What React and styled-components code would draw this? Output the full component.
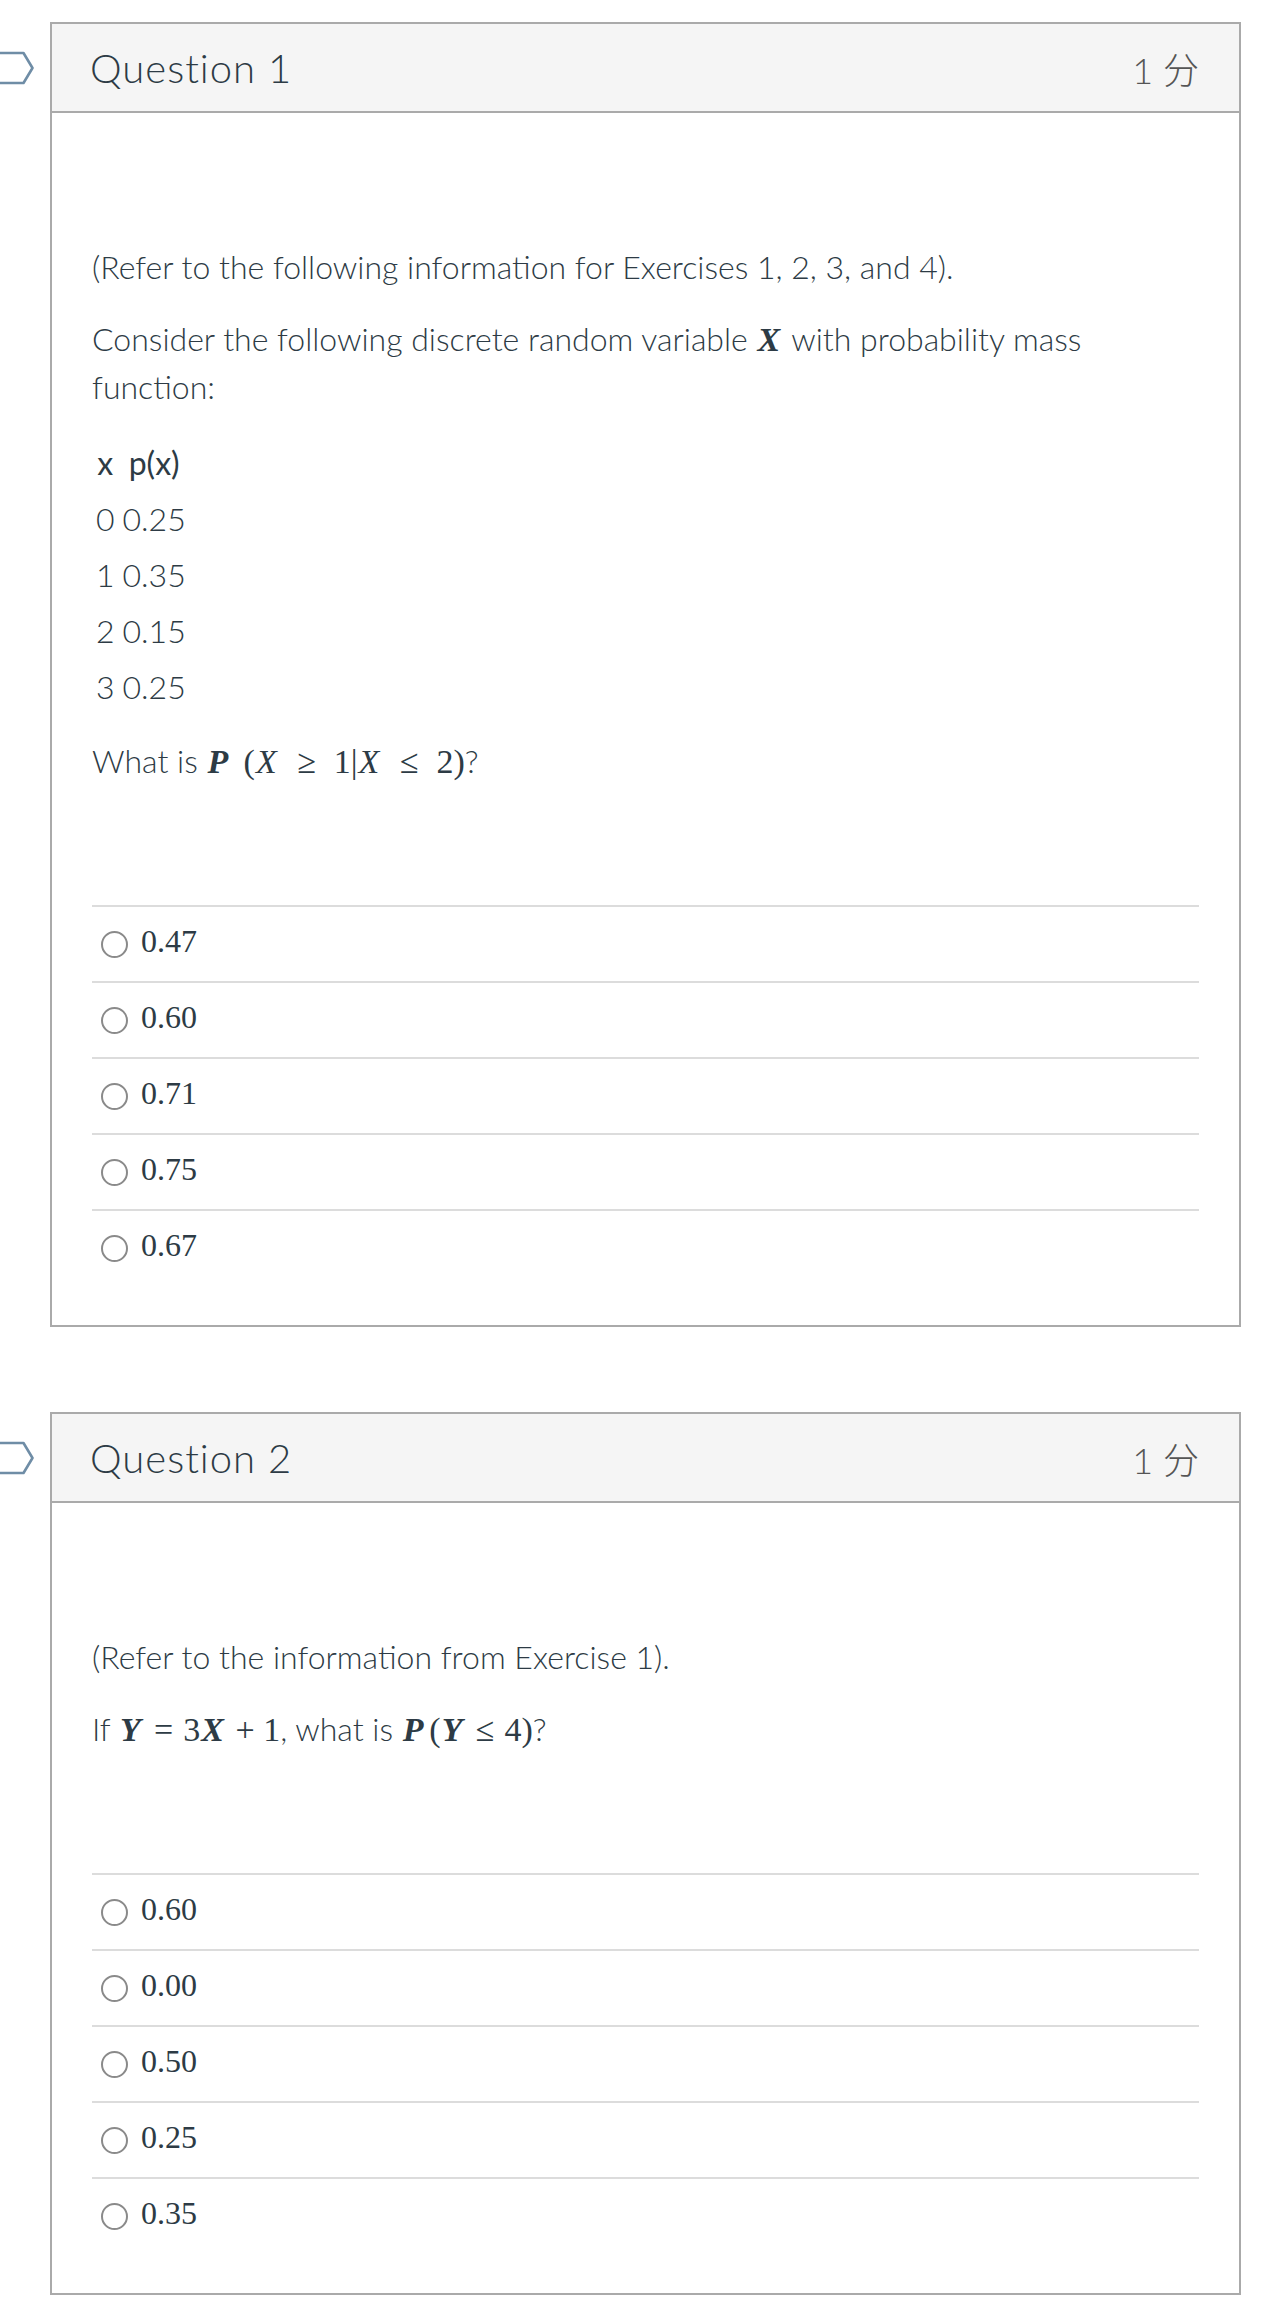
import React from "react";
import styled, { createGlobalStyle } from "styled-components";

const GlobalStyle = createGlobalStyle`
  html, body {
    margin: 0;
    padding: 0;
    background: #ffffff;
  }
  body {
    font-family: Lato, "Noto Sans", "Noto Sans CJK SC", sans-serif;
    font-weight: 300;
    color: #2d3b45;
  }
`;

const Page = styled.div`
  display: flex;
  flex-direction: column;
  gap: 85px;
  padding: 22px 0 25px 50px;
`;

const Card = styled.section`
  position: relative;
  width: 1191px;
  box-sizing: border-box;
  border: 2px solid #aaaaaa;
  background: #ffffff;
`;

const Flag = styled.svg`
  position: absolute;
  left: -52px;
  top: 26px;
  width: 34px;
  height: 36px;
  overflow: visible;
`;

const Header = styled.header`
  display: flex;
  align-items: center;
  justify-content: space-between;
  height: 87px;
  padding: 0 40px 0 38px;
  background: #f5f5f5;
  border-bottom: 2px solid #aaaaaa;
`;

const Title = styled.h2`
  margin: 0;
  font-family: Lato, "Noto Sans", sans-serif;
  font-size: 40px;
  font-weight: 300;
  letter-spacing: 1px;
  color: #2d3b45;
`;

const Points = styled.span`
  font-family: Lato, "Noto Sans CJK SC", sans-serif;
  font-size: 36px;
  font-weight: 300;
  color: #555555;
`;

const Body = styled.div`
  padding: 130px 40px 40px 40px;
`;

const Para = styled.p`
  margin: 0 0 24px 0;
  font-size: 32px;
  line-height: 48px;
  &:last-child {
    margin-bottom: 0;
  }
`;

const Table = styled.table`
  border-collapse: collapse;
  margin: 22px 0;
  font-size: 32px;
  line-height: 48px;
  color: #2d3b45;

  th,
  td {
    padding: 4px;
    vertical-align: middle;
  }
  th {
    font-weight: 400;
    text-align: center;
  }
  td {
    text-align: left;
  }
`;

const Mathx = styled.span`
  font-family: "Liberation Serif", "Times New Roman", serif;
  font-size: 34px;
  font-weight: 400;
  line-height: 1;
  white-space: nowrap;
`;

const Mi = styled.i`
  font-style: italic;
  font-weight: ${(p) => (p.$bold ? 700 : 400)};
  padding: 0 0.09em 0 0.03em;
`;

const Rel = styled.span`
  margin: 0 ${(p) => p.$space || "0.3em"};
`;

const Bin = styled.span`
  margin: 0 0.25em;
`;

const Thin = styled.span`
  display: inline-block;
  width: ${(p) => p.$w || "0.2em"};
`;

const Answers = styled.div`
  margin-top: 120px;
`;

const AnswerRow = styled.label`
  display: flex;
  align-items: center;
  gap: 13px;
  height: 76px;
  box-sizing: border-box;
  padding-left: 9px;
  border-top: 2px solid #dcdcdc;
  cursor: pointer;
`;

const Radio = styled.input.attrs({ type: "radio" })`
  appearance: none;
  margin: 0;
  width: 27px;
  height: 27px;
  box-sizing: border-box;
  border: 2.5px solid #8a8a8a;
  border-radius: 50%;
  background: #ffffff;
  flex-shrink: 0;
`;

const AnswerText = styled.span`
  font-family: "Liberation Serif", "Times New Roman", serif;
  font-size: 32px;
  font-weight: 400;
  line-height: 48px;
  padding-bottom: 6px;
  color: #2d3b45;
`;

function FlagIcon() {
  return (
    <Flag viewBox="0 0 34 36" aria-hidden="true">
      <path
        d="M-10 3 H23.5 L32.5 18 L23.5 33 H-10"
        fill="none"
        stroke="#6f8da6"
        strokeWidth="2.6"
        strokeLinejoin="round"
      />
    </Flag>
  );
}

function Question({ name, number, children, answers }) {
  return (
    <Card>
      <FlagIcon />
      <Header>
        <Title>Question {number}</Title>
        <Points>1 分</Points>
      </Header>
      <Body>
        {children}
        <Answers>
          {answers.map((a) => (
            <AnswerRow key={a}>
              <Radio name={name} />
              <AnswerText>{a}</AnswerText>
            </AnswerRow>
          ))}
        </Answers>
      </Body>
    </Card>
  );
}

const pmf = [
  ["0", "0.25"],
  ["1", "0.35"],
  ["2", "0.15"],
  ["3", "0.25"],
];

export default function App() {
  return (
    <>
      <GlobalStyle />
      <Page>
        <Question
          name="q1"
          number={1}
          answers={["0.47", "0.60", "0.71", "0.75", "0.67"]}
        >
          <Para>(Refer to the following information for Exercises 1, 2, 3, and 4).</Para>
          <Para>
            Consider the following discrete random variable{" "}
            <Mathx>
              <Mi $bold>X</Mi>
            </Mathx>{" "}
            with probability mass function:
          </Para>
          <Table>
            <thead>
              <tr>
                <th>x</th>
                <th>p(x)</th>
              </tr>
            </thead>
            <tbody>
              {pmf.map(([x, p]) => (
                <tr key={x}>
                  <td>{x}</td>
                  <td>{p}</td>
                </tr>
              ))}
            </tbody>
          </Table>
          <Para>
            What is{" "}
            <Mathx>
              <Mi $bold>P</Mi>
              <Thin $w="0.36em" />
              (<Mi>X</Mi>
              <Rel $space="0.52em">≥</Rel>1|<Mi>X</Mi>
              <Rel $space="0.52em">≤</Rel>2)
            </Mathx>
            ?
          </Para>
        </Question>

        <Question
          name="q2"
          number={2}
          answers={["0.60", "0.00", "0.50", "0.25", "0.35"]}
        >
          <Para>(Refer to the information from Exercise 1).</Para>
          <Para>
            If{" "}
            <Mathx>
              <Mi $bold>Y</Mi>
              <Rel>=</Rel>3<Mi $bold>X</Mi>
              <Bin>+</Bin>1
            </Mathx>
            , what is{" "}
            <Mathx>
              <Mi $bold>P</Mi>
              <Thin $w="0.08em" />
              (<Mi $bold>Y</Mi>
              <Rel>≤</Rel>4)
            </Mathx>
            ?
          </Para>
        </Question>
      </Page>
    </>
  );
}
